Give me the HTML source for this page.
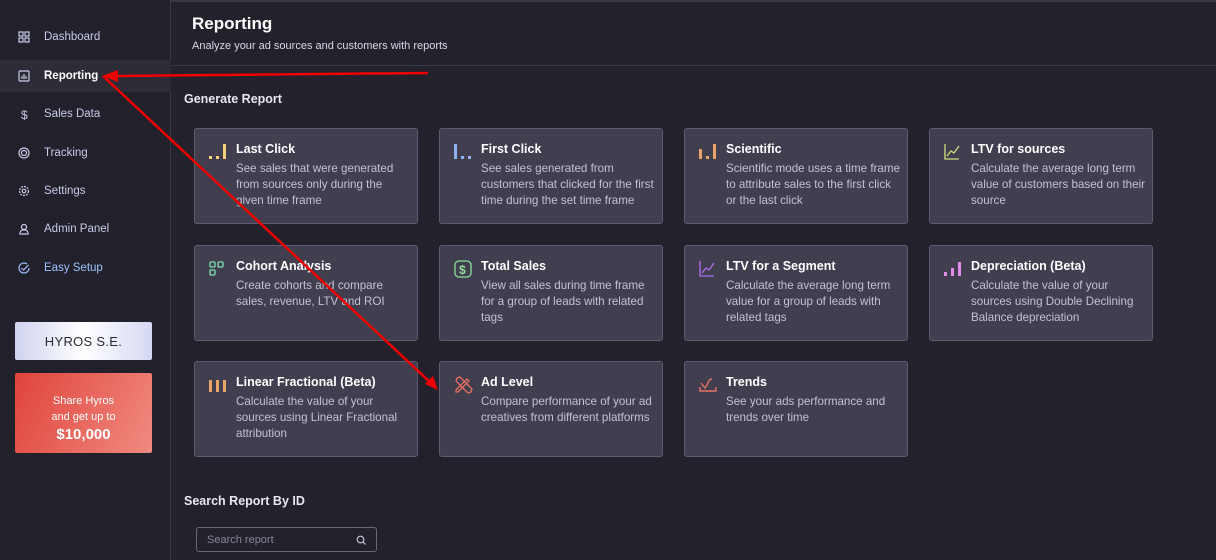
<!DOCTYPE html>
<html><head><meta charset="utf-8"><style>
*{box-sizing:border-box;margin:0;padding:0}
body{width:1216px;height:560px;overflow:hidden;background:#23222c;font-family:"Liberation Sans",sans-serif;position:relative;color:#fff}
.sb{position:absolute;left:0;top:0;width:171px;height:560px;background:#22212b;border-right:1px solid #3a3946}
.top{position:absolute;left:0;top:0;width:1216px;height:2px;background:#3a3946}
.it{position:absolute;left:0;width:171px;height:32px;display:flex;align-items:center;font-size:11.5px;color:#c8cbe8}
.it svg{position:absolute;left:17px}
.it span{position:absolute;left:44px}
.act{background:#2d2c37;color:#fff;font-weight:bold}
.hy{position:absolute;left:15px;top:322px;width:137px;height:38px;background:linear-gradient(90deg,#cfd3ef,#fff 50%,#d5d8f3);color:#2b2a3a;font-size:13px;display:flex;align-items:center;justify-content:center;border-radius:2px;letter-spacing:.3px}
.rd{position:absolute;left:15px;top:373px;width:137px;height:80px;background:linear-gradient(115deg,#e0443b,#f08a80);border-radius:2px;text-align:center;font-size:11px;color:#fff;padding-top:20px;line-height:16px}
.rd b{font-size:15px;display:block;margin-top:2px}
h1{position:absolute;left:192px;top:14px;font-size:17px}
.sub{position:absolute;left:192px;top:40px;font-size:11px;color:#d8d8e8}
.hl{position:absolute;left:172px;top:65px;width:1044px;height:1px;background:#3a3946}
.sec{position:absolute;left:184px;font-size:12.5px;font-weight:bold;color:#e8e8f0}
.c{position:absolute;width:224px;height:96px;background:#413e50;border:1px solid #5f5c72;border-radius:3px}
.c svg{position:absolute;left:13px;top:13px}
.c b{position:absolute;left:41px;top:13px;font-size:12.5px;color:#fff}
.c p{position:absolute;left:41px;top:32px;width:177px;font-size:11.6px;line-height:16px;color:#c4c2d2}
.srch{position:absolute;left:196px;top:527px;width:181px;height:25px;border:1px solid #6a6878;border-radius:3px;font-size:11px;color:#888696;padding:6px 0 0 10px}
</style></head><body>
<div class="top"></div>
<div class="sb">
<div class="it" style="top:21px"><svg width="14" height="14" viewBox="0 0 14 14" fill="none" stroke="#c8cbe8" stroke-width="1.2"><rect x="2" y="2" width="4" height="4"/><rect x="8" y="2" width="4" height="4"/><rect x="2" y="8" width="4" height="4"/><rect x="8" y="8" width="4" height="4"/></svg><span>Dashboard</span></div>
<div class="it act" style="top:60px"><svg width="14" height="14" viewBox="0 0 14 14" fill="none" stroke="#c8cbe8" stroke-width="1.2"><rect x="2" y="2" width="10" height="10" rx="1"/><path d="M5 10V7M7 10V5M9 10V7"/></svg><span>Reporting</span></div>
<div class="it" style="top:98px"><svg width="14" height="14" viewBox="0 0 14 14"><text x="4" y="12" fill="#c8cbe8" font-size="12" font-family="Liberation Sans">$</text></svg><span>Sales Data</span></div>
<div class="it" style="top:137px"><svg width="14" height="14" viewBox="0 0 14 14" fill="none" stroke="#c8cbe8" stroke-width="1.2"><circle cx="7" cy="7" r="5"/><circle cx="7" cy="7" r="2.5"/></svg><span>Tracking</span></div>
<div class="it" style="top:175px"><svg width="14" height="14" viewBox="0 0 14 14" fill="none" stroke="#c8cbe8" stroke-width="1.2"><circle cx="7" cy="7" r="4.5" stroke-dasharray="2 1"/><circle cx="7" cy="7" r="1.8"/></svg><span>Settings</span></div>
<div class="it" style="top:213px"><svg width="14" height="14" viewBox="0 0 14 14" fill="none" stroke="#c8cbe8" stroke-width="1.2"><circle cx="7" cy="5" r="2.5"/><path d="M3 12h8v-1a3 3 0 0 0-3-3H6a3 3 0 0 0-3 3z"/></svg><span>Admin Panel</span></div>
<div class="it" style="top:252px;color:#9ec0ff"><svg width="14" height="14" viewBox="0 0 14 14" fill="none" stroke="#9ec0ff" stroke-width="1.2"><path d="M12 7a5 5 0 1 1-2-4"/><path d="M4.5 7l2 2 5-5"/></svg><span>Easy Setup</span></div>
<div class="hy">HYROS S.E.</div>
<div class="rd">Share Hyros<br>and get up to<b>$10,000</b></div>
</div>
<h1>Reporting</h1>
<div class="sub">Analyze your ad sources and customers with reports</div>
<div class="hl"></div>
<div class="sec" style="top:92px">Generate Report</div>

<div class="c" style="left:194px;top:128px"><svg width="20" height="20"><rect x="1" y="14" width="3" height="3" fill="#f3d27a"/><rect x="8" y="14" width="3" height="3" fill="#f3d27a"/><rect x="15" y="2" width="3" height="15" fill="#f3d27a"/></svg><b>Last Click</b><p>See sales that were generated from sources only during the given time frame</p></div>
<div class="c" style="left:439px;top:128px"><svg width="20" height="20"><rect x="1" y="2" width="3" height="15" fill="#8fb2f0"/><rect x="8" y="14" width="3" height="3" fill="#8fb2f0"/><rect x="15" y="14" width="3" height="3" fill="#8fb2f0"/></svg><b>First Click</b><p>See sales generated from customers that clicked for the first time during the set time frame</p></div>
<div class="c" style="left:684px;top:128px"><svg width="20" height="20"><rect x="1" y="7" width="3" height="10" fill="#e9a46a"/><rect x="8" y="14" width="3" height="3" fill="#e9a46a"/><rect x="15" y="2" width="3" height="15" fill="#e9a46a"/></svg><b>Scientific</b><p>Scientific mode uses a time frame to attribute sales to the first click or the last click</p></div>
<div class="c" style="left:929px;top:128px"><svg width="20" height="20" fill="none" stroke="#cde07a" stroke-width="1.3"><path d="M2 2v15h14M4 14l4-5 3 2 5-7"/></svg><b>LTV for sources</b><p>Calculate the average long term value of customers based on their source</p></div>

<div class="c" style="left:194px;top:245px"><svg width="20" height="20" fill="none" stroke="#7de0b0" stroke-width="1.3"><rect x="2" y="3" width="5" height="5" rx="1"/><rect x="10" y="3" width="5" height="5" rx="1"/><rect x="2" y="11" width="5" height="5" rx="1"/></svg><b>Cohort Analysis</b><p>Create cohorts and compare sales, revenue, LTV and ROI</p></div>
<div class="c" style="left:439px;top:245px"><svg width="20" height="20" fill="none" stroke="#8ee09a" stroke-width="1.3"><rect x="2" y="2" width="16" height="16" rx="4"/><text x="6" y="15" fill="#8ee09a" stroke="none" font-size="12" font-weight="bold" font-family="Liberation Sans">$</text></svg><b>Total Sales</b><p>View all sales during time frame for a group of leads with related tags</p></div>
<div class="c" style="left:684px;top:245px"><svg width="20" height="20" fill="none" stroke="#b070f0" stroke-width="1.3"><path d="M2 2v15h14M4 14l4-5 3 2 5-7"/></svg><b>LTV for a Segment</b><p>Calculate the average long term value for a group of leads with related tags</p></div>
<div class="c" style="left:929px;top:245px"><svg width="20" height="20"><rect x="1" y="13" width="3" height="4" fill="#e28be8"/><rect x="8" y="9" width="3" height="8" fill="#e28be8"/><rect x="15" y="3" width="3" height="14" fill="#e28be8"/></svg><b>Depreciation (Beta)</b><p>Calculate the value of your sources using Double Declining Balance depreciation</p></div>

<div class="c" style="left:194px;top:361px"><svg width="20" height="20"><rect x="1" y="5" width="3" height="12" fill="#e9a46a"/><rect x="8" y="5" width="3" height="12" fill="#e9a46a"/><rect x="15" y="5" width="3" height="12" fill="#e9a46a"/></svg><b>Linear Fractional (Beta)</b><p>Calculate the value of your sources using Linear Fractional attribution</p></div>
<div class="c" style="left:439px;top:361px"><svg width="20" height="20" fill="none" stroke="#e87060" stroke-width="1.3"><path d="M3 15L14 4l2 2L5 17H3z"/><path d="M4 3l3-1 12 12-1 3-3 1L3 6z"/></svg><b>Ad Level</b><p>Compare performance of your ad creatives from different platforms</p></div>
<div class="c" style="left:684px;top:361px"><svg width="20" height="20" fill="none" stroke="#e87060" stroke-width="1.4"><path d="M3 8l4 5c3-3 3-9 7-9M2 12v4h16v-4"/></svg><b>Trends</b><p>See your ads performance and trends over time</p></div>

<div class="sec" style="top:494px">Search Report By ID</div>
<div class="srch">Search report<svg style="position:absolute;right:10px;top:7px" width="10" height="10" fill="none" stroke="#c8c8d8" stroke-width="1.2"><circle cx="4.5" cy="4.5" r="3.3"/><path d="M7 7l2.5 2.5"/></svg></div>

<svg style="position:absolute;left:0;top:0" width="1216" height="560" fill="none" stroke="#f00000" stroke-width="2.5">
<path d="M428 73L110 76M103 76L432 384"/>
<path d="M102 76l16-6v12z" fill="#f00000" stroke="none"/>
<path d="M438 390l-13-6 8-8z" fill="#f00000" stroke="none"/>
</svg>
</body></html>
